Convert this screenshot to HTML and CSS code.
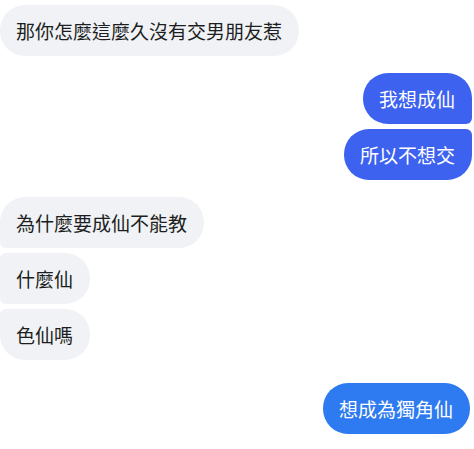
FILE: index.html
```html
<!DOCTYPE html>
<html lang="zh-Hant">
<head>
  <meta charset="UTF-8">
  <meta name="viewport" content="width=device-width, initial-scale=1.0">
  <title>Chat</title>
  <link rel="stylesheet" href="styles.css">
</head>
<body>

<div id="chat">
  <div class="group theirs first-group">
    <div class="bubble single">那你怎麼這麼久沒有交男朋友惹</div>
  </div>

  <div class="group mine">
    <div class="bubble top">我想成仙</div>
    <div class="bubble bottom">所以不想交</div>
  </div>

  <div class="group theirs">
    <div class="bubble top">為什麼要成仙不能教</div>
    <div class="bubble middle">什麼仙</div>
    <div class="bubble bottom">色仙嗎</div>
  </div>

  <div class="group mine last-group">
    <div class="bubble single alt">想成為獨角仙</div>
  </div>
</div>

</body>
</html>
```

FILE: styles.css
```css
* {
  box-sizing: border-box;
  margin: 0;
  padding: 0;
}

body {
  background-color: #ffffff;
  font-family: 'Noto Sans CJK TC', 'Noto Sans', sans-serif;
  width: 474px;
  height: 449px;
  overflow: hidden;
}

#chat {
  display: flex;
  flex-direction: column;
  padding: 5px 2px 0 0;
}

.group {
  display: flex;
  flex-direction: column;
  gap: 5px;
  margin-top: 17px;
}

.first-group {
  margin-top: 0;
}

.last-group {
  margin-top: 23px;
}

.theirs {
  align-items: flex-start;
}

.mine {
  align-items: flex-end;
}

.bubble {
  height: 51px;
  line-height: 51px;
  padding: 0 17px 0 16px;
  font-size: 19px;
  white-space: nowrap;
  border-radius: 25px;
}

.theirs .bubble {
  background-color: #f0f2f5;
  color: #1c1e21;
}

.mine .bubble {
  background-color: #3d62ef;
  color: #ffffff;
}

.mine .bubble.alt {
  background-color: #2e7af0;
  margin-right: 2px;
}

/* grouped corners */
.theirs .top {
  border-bottom-left-radius: 6px;
}

.theirs .middle {
  border-top-left-radius: 6px;
  border-bottom-left-radius: 6px;
}

.theirs .bottom {
  border-top-left-radius: 6px;
}

.mine .top {
  border-bottom-right-radius: 6px;
}

.mine .bottom {
  border-top-right-radius: 6px;
}
```
